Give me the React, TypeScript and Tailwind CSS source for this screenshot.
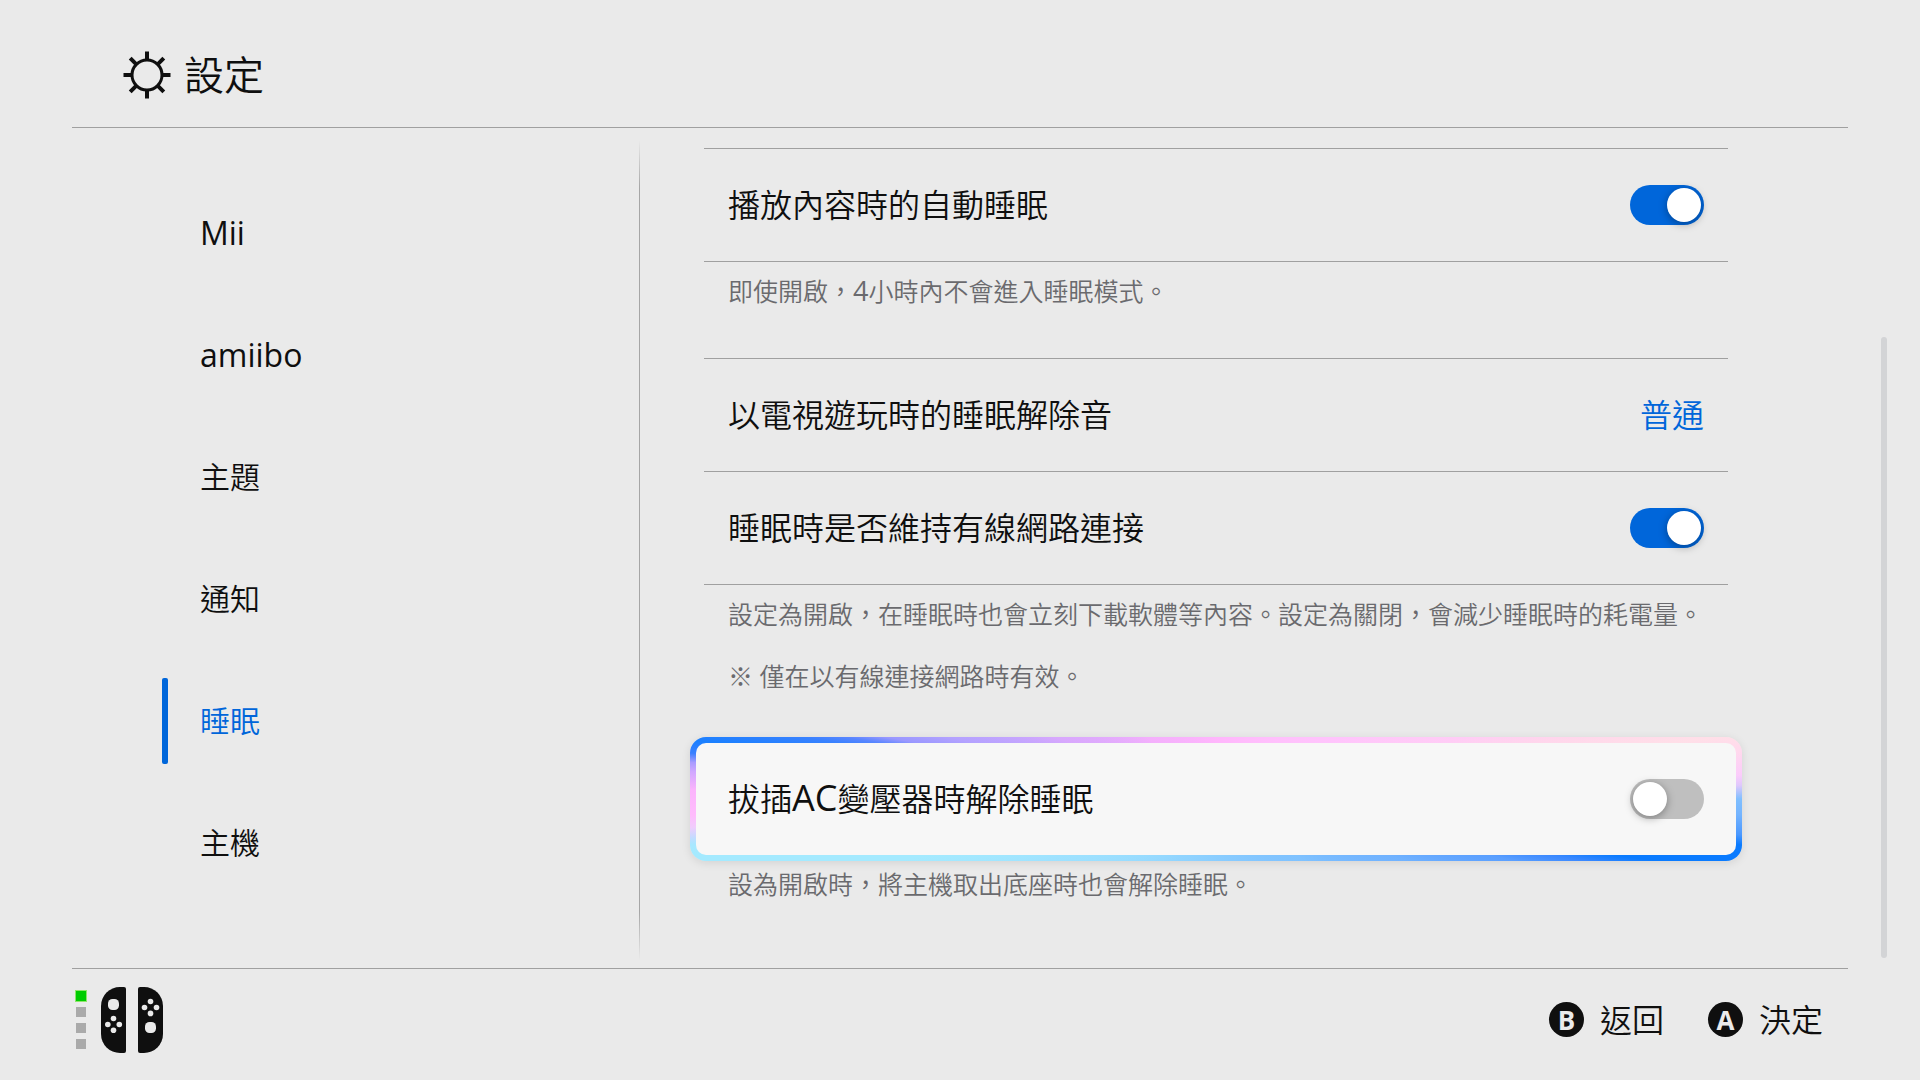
import React from "react";

const SANS = "font-['Open_Sans','Noto_Sans_CJK_TC',sans-serif]";

const NAV = [
  { label: "Mii", latin: true },
  { label: "amiibo", latin: true },
  { label: "主題" },
  { label: "通知" },
  { label: "睡眠", active: true },
  { label: "主機" },
];

function GearIcon() {
  return (
    <svg width="48" height="48" viewBox="0 0 48 48" fill="none" stroke="#0f0f0f" aria-hidden="true">
      <circle cx="24" cy="24" r="15" strokeWidth="3" />
      <path
        strokeWidth="4"
        d="M24 0.5V9M24 39v8.5M0.5 24H9M39 24h8.5M7.2 7.2l6.2 6.2M34.6 34.6l6.2 6.2M40.8 7.2l-6.2 6.2M13.4 34.6l-6.2 6.2"
      />
    </svg>
  );
}

function JoyConIcon() {
  return (
    <svg width="62" height="66" viewBox="0 0 62 66" aria-hidden="true">
      <path fill="#0f0f0f" d="M19 0h4a2 2 0 0 1 2 2v62a2 2 0 0 1-2 2h-4A19 19 0 0 1 0 47V19A19 19 0 0 1 19 0z" />
      <path fill="#0f0f0f" d="M43 0h-4a2 2 0 0 0-2 2v62a2 2 0 0 0 2 2h4a19 19 0 0 0 19-19V19A19 19 0 0 0 43 0z" />
      <g fill="#eaeaea">
        <rect x="7" y="12" width="11" height="11" rx="4.5" />
        <circle cx="12.5" cy="31.5" r="2.8" />
        <circle cx="12.5" cy="43.3" r="2.8" />
        <circle cx="6.8" cy="37.5" r="2.8" />
        <circle cx="18.3" cy="37.5" r="2.8" />
        <rect x="44" y="35" width="11" height="11" rx="4.5" />
        <circle cx="49.5" cy="14.5" r="2.8" />
        <circle cx="49.5" cy="26.4" r="2.8" />
        <circle cx="43.5" cy="20.5" r="2.8" />
        <circle cx="55.5" cy="20.5" r="2.8" />
      </g>
    </svg>
  );
}

function Toggle({ id, on = false }: { id: string; on?: boolean }) {
  return (
    <input
      id={id}
      type="checkbox"
      role="switch"
      defaultChecked={on}
      className="h-10 w-[74px] shrink-0 cursor-pointer appearance-none rounded-full bg-[#bfbfbf] p-[3px] before:block before:size-[34px] before:rounded-full before:bg-white before:shadow-[0_2px_8px_rgba(0,0,0,0.35)] checked:bg-[#0066da] checked:before:translate-x-[34px]"
    />
  );
}

function Row({ id, children, control }: { id: string; children: React.ReactNode; control: React.ReactNode }) {
  return (
    <div className="box-content flex h-28 items-center justify-between px-6">
      <label htmlFor={id} className="text-[32px] leading-[48px]">
        {children}
      </label>
      {control}
    </div>
  );
}

function Note({ children }: { children: React.ReactNode }) {
  return <p className="px-6 text-[25px] leading-[58px] whitespace-nowrap text-[#6a6a6e]">{children}</p>;
}

function Hint({ letter, label }: { letter: string; label: string }) {
  return (
    <button type="button" className="flex items-center gap-4 text-[32px] leading-[48px]">
      <span className="flex size-[35px] items-center justify-center rounded-full bg-[#0f0f0f] text-[26px] leading-none font-bold text-[#eaeaea]">
        {letter}
      </span>
      {label}
    </button>
  );
}

export default function App() {
  return (
    <div className={`flex min-h-screen flex-col bg-[#eaeaea] font-[350] text-[#0f0f0f] ${SANS}`} lang="zh-Hant">
      <header className="mx-[72px] flex h-32 items-center gap-[13px] border-b border-[#a0a0a0] pt-[22px] pr-6 pl-[51px]">
        <GearIcon />
        <h1 className="text-[40px] leading-[60px]">設定</h1>
      </header>

      <main className="flex flex-1">
        <nav className="flex w-1/3 pt-3 pb-2" aria-label="設定">
          <ul className="flex-1 pt-8">
            {NAV.map((item) => (
              <li key={item.label}>
                <button
                  type="button"
                  aria-current={item.active ? "page" : undefined}
                  className={`flex h-[122px] w-full items-center gap-8 pl-[162px] ${item.active ? "text-[#0066da]" : ""}`}
                >
                  <span className={`h-[86px] w-1.5 rounded-xs ${item.active ? "bg-[#0066da]" : ""}`} />
                  <span
                    className={item.latin ? "text-[32px] leading-[48px] font-normal" : "text-[30px] leading-[48px]"}
                  >
                    {item.label}
                  </span>
                </button>
              </li>
            ))}
          </ul>
          <div className="w-px bg-[linear-gradient(to_bottom,transparent,#a6a6a6_48px,#a6a6a6_calc(100%-48px),transparent)]" />
        </nav>

        <section className="flex-1 pt-5 pr-[153px] pl-16">
          <div className="mb-[38px]">
            <div className="border-y border-[#a0a0a0]">
              <Row id="media-sleep" control={<Toggle id="media-sleep" on />}>
                播放內容時的自動睡眠
              </Row>
            </div>
            <Note>
              即使開啟，<span className="text-[27px] leading-none font-normal">4</span>小時內不會進入睡眠模式。
            </Note>
          </div>

          <div className="mb-[38px]">
            <div className="divide-y divide-[#a0a0a0] border-y border-[#a0a0a0]">
              <Row
                id="wake-sound"
                control={
                  <button id="wake-sound" type="button" className="text-[32px] leading-[48px] text-[#0066da]">
                    普通
                  </button>
                }
              >
                以電視遊玩時的睡眠解除音
              </Row>
              <Row id="wired-sleep" control={<Toggle id="wired-sleep" on />}>
                睡眠時是否維持有線網路連接
              </Row>
            </div>
            <div className="flex flex-col gap-1">
              <Note>設定為開啟，在睡眠時也會立刻下載軟體等內容。設定為關閉，會減少睡眠時的耗電量。</Note>
              <Note>※ 僅在以有線連接網路時有效。</Note>
            </div>
          </div>

          <div>
            <div className="-mx-3.5 -my-1.5 rounded-2xl bg-[conic-gradient(#ffb6fc_0deg,#ffb8fc_11deg,#ffc4fc_64deg,#ffccf6_76deg,#ffd6ec_80deg,#ffdfe8_83deg,#ffd8ee_85deg,#fbccfb_87.4deg,#dfc8fc_88.5deg,#80bfff_90deg,#74b4ff_91.7deg,#4a98ff_93.9deg,#0a7bff_95deg,#0a7bff_98deg,#3a88ff_99.5deg,#5a9fff_101.7deg,#70b2ff_108deg,#7fc2ff_125deg,#90d4ff_211deg,#9ee2ff_250deg,#a4eaff_259deg,#a4eaff_264deg,#a8e8ff_265deg,#c0dcff_265.7deg,#f0ccfc_266.9deg,#ffbcfc_268.2deg,#fbb4fc_271deg,#cfa8ff_273deg,#a89cff_274deg,#3a80ff_275deg,#1a80ff_276.4deg,#3a82ff_278.5deg,#5a86ff_279.5deg,#9a98ff_280.6deg,#b4a2ff_283deg,#d8a8fd_291deg,#f4b0fc_312deg,#ffb6fc_360deg)] p-1.5 shadow-[0_2px_10px_rgba(0,0,0,0.1)]">
              <div className="rounded-[10px] bg-[#f7f7f7] px-2">
                <Row id="ac-wake" control={<Toggle id="ac-wake" />}>
                  拔插<span className="text-[36px] leading-none font-normal">AC</span>變壓器時解除睡眠
                </Row>
              </div>
            </div>
            <Note>設為開啟時，將主機取出底座時也會解除睡眠。</Note>
          </div>
        </section>
        <div className="mt-[209px] mr-[33px] mb-2.5 w-1.5 rounded-full bg-[#d3d4d6]" />
      </main>

      <footer className="mx-[72px] flex h-28 items-center justify-between border-t border-[#a0a0a0] pr-[25px] pl-1">
        <div className="flex items-center gap-[15px] pb-2.5">
          <div className="flex flex-col gap-1.5">
            <span className="size-2.5 bg-[#00cc00] ring-1 ring-[#8ee66b]" />
            <span className="size-2.5 bg-[#aaaaaa]" />
            <span className="size-2.5 bg-[#aaaaaa]" />
            <span className="size-2.5 bg-[#aaaaaa]" />
          </div>
          <JoyConIcon />
        </div>
        <div className="flex gap-11 pb-2.5">
          <Hint letter="B" label="返回" />
          <Hint letter="A" label="決定" />
        </div>
      </footer>
    </div>
  );
}
